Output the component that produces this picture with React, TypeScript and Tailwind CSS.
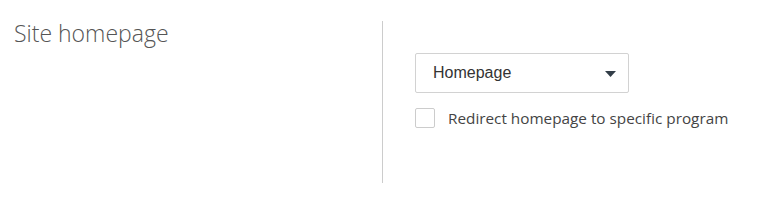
export default function App() {
  return (
    <div className="w-[762px] h-[205px] bg-white flex pt-[21px]" style={{ fontFamily: '"Open Sans", "Liberation Sans", sans-serif' }}>
      <div className="w-[382px] shrink-0 pl-[14px]">
        <h2 className="text-[23px] font-light text-[#555] leading-[28px] -mt-[2px]">Site homepage</h2>
      </div>
      <div className="h-[162px] border-l border-[#ccc] pl-[32px] pt-[32px]">
        <div className="w-[214px] h-[40px] border border-[#d2d2d2] rounded-[2px] flex items-center justify-between pl-[17px] pr-[12px]">
          <span className="text-[16px] text-[#333] font-['Liberation_Sans',sans-serif]">Homepage</span>
          <svg width="11" height="6" viewBox="0 0 11 6" className="mt-[1px]">
            <path d="M0 0h11L5.5 6z" fill="#333e48" />
          </svg>
        </div>
        <label className="flex items-center mt-[15px]">
          <span className="w-[20px] h-[20px] border border-[#ccc] rounded-[2px] bg-white" />
          <span className="ml-[13px] text-[15.3px] leading-[20px] text-[#444]">Redirect homepage to specific program</span>
        </label>
      </div>
    </div>
  );
}
